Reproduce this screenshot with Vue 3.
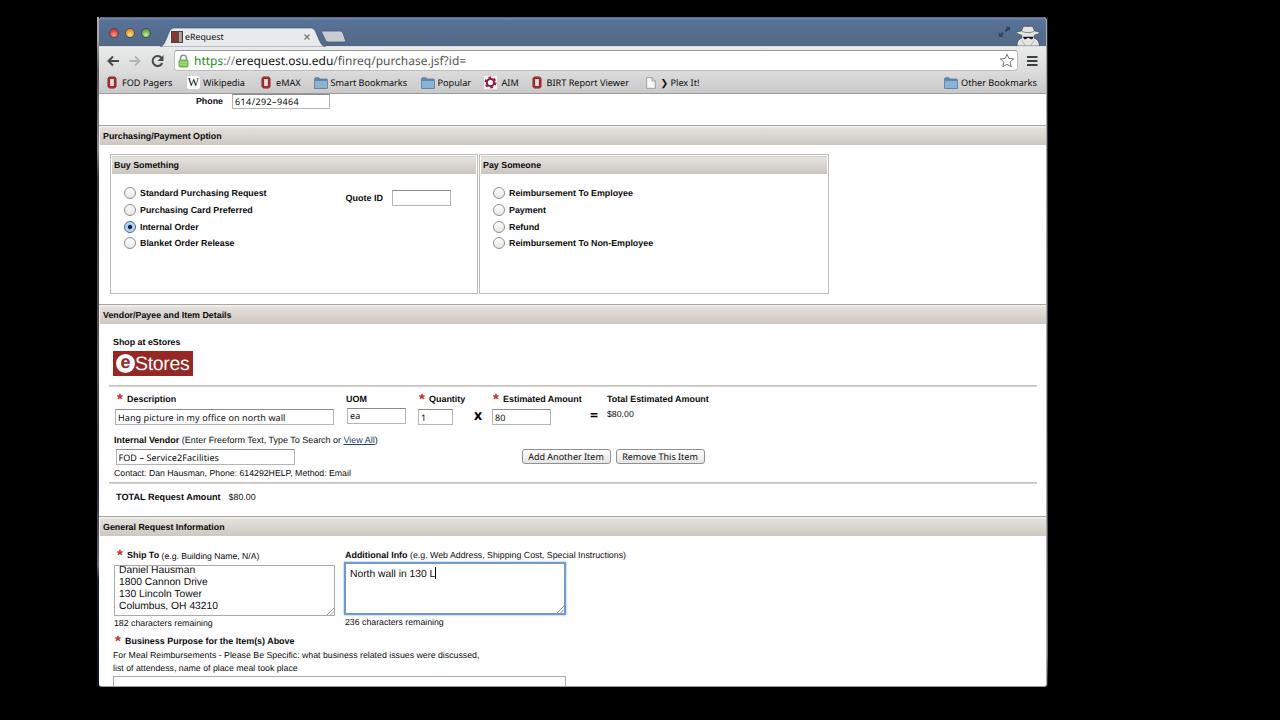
<script setup>
const bookmarks = [
  { icon: 'osu', label: 'FOD Pagers', w: 80 },
  { icon: 'wiki', label: 'Wikipedia', w: 74 },
  { icon: 'osu', label: 'eMAX', w: 52.5 },
  { icon: 'folder', label: 'Smart Bookmarks', w: 107 },
  { icon: 'folder', label: 'Popular', w: 63 },
  { icon: 'aim', label: 'AIM', w: 48 },
  { icon: 'osu', label: 'BIRT Report Viewer', w: 114 },
  { icon: 'page', label: '❯ Plex It!', w: 60 },
]
const buyOptions = ['Standard Purchasing Request', 'Purchasing Card Preferred', 'Internal Order', 'Blanket Order Release']
const payOptions = ['Reimbursement To Employee', 'Payment', 'Refund', 'Reimbursement To Non-Employee']
const selected = 'Internal Order'
const address = ['Daniel Hausman', '1800 Cannon Drive', '130 Lincoln Tower', 'Columbus, OH 43210']
</script>

<template>
  <div class="desktop">
    <div class="edge left"></div>
    <div class="window">
      <header class="titlebar">
        <div class="lights"><i class="red"></i><i class="amber"></i><i class="green"></i></div>
        <div class="tab">
          <svg class="tab-shape" width="166" height="20" viewBox="0 0 166 20">
            <path d="M0 20 C4 19 5 15 8 8 C10 3 11 1 15 1 H150 C154 1 155 3 157 8 C160 15 161 19 166 20Z" fill="#e9eaeb" stroke="#41536f" stroke-width=".6" />
          </svg>
          <svg class="favicon" width="12" height="12" viewBox="0 0 12 12">
            <rect width="12" height="12" fill="#474443" /><rect x="1" y="1" width="5.5" height="10" fill="#8c3532" /><rect x="6.5" y="1" width="1.5" height="10" fill="#5d4a48" /><rect x="8" y="1" width="2.7" height="10" fill="#b4aaa4" />
          </svg>
          <span class="tab-title">eRequest</span>
          <svg class="close" width="6" height="6" viewBox="0 0 6 6"><path d="M.5 .5 5.5 5.5M5.5 .5 .5 5.5" stroke="#7b7b7b" stroke-width="1.3" /></svg>
        </div>
        <svg class="newtab" width="26" height="13" viewBox="0 0 26 13"><path d="M1.5 1 H19 Q21 1 22 3 L24.5 10.5 Q25 12 23 12 H7.500 Q5.500 12 4.700 10.500 L1 3 Q.3 1 1.500 1Z" fill="#c9ccce" stroke="#48597a" stroke-width=".8" /></svg>
        <svg class="expand" width="13" height="12" viewBox="0 0 13 12"><path d="M7.500 .8H12V5.300L10.500 3.800 8.300 6 6.800 4.500 9 2.300ZM.8 6.300V11H5.500L4 9.500 6 7.500 4.500 6 2.300 8Z" fill="#2f435f" /></svg>
        <svg class="incognito" width="26" height="21" viewBox="0 0 26 21">
          <path d="M2 21 C2 16 4 14 7 13 L6.500 10 C4 9.500 1.500 8.500 1 7.500 C3 6.500 5 6.500 6.500 6 L8 2 C9 .5 11 1.500 13 1.500 C15 1.500 17 .5 18 2 L19.500 6 C21 6.500 23 6.500 25 7.500 C24.500 8.500 22 9.500 19.500 10 L19 13 C22 14 24 16 24.500 21Z" fill="#e4e4e3" stroke="#40485a" stroke-width=".7" />
          <path d="M7 6.500 C11 8 15 8 19 6.500" fill="none" stroke="#8b8b8b" stroke-width="1" />
          <path d="M8 11.800H18.500L17.500 14Q15.800 15 14.200 13H12.300Q10.700 15 9 14Z" fill="#17191d" />
          <path d="M7 15.500 10.500 21M19 15.500 15.500 21" stroke="#a5a5a5" stroke-width=".8" />
        </svg>
      </header>

      <div class="toolbar">
        <svg class="nav" width="62" height="16" viewBox="0 0 62 16" fill="none">
          <path d="M14 8H3.500M8 3.500 3.500 8 8 12.500" stroke="#484848" stroke-width="2" />
          <path d="M24.500 8H34.500M30 3.500 34.500 8 30 12.500" stroke="#b3b3b3" stroke-width="1.8" />
          <path d="M56.500 4.800A5 5 0 1 0 57.200 10" stroke="#484848" stroke-width="2" /><path d="M58.500 2V8H52.500Z" fill="#484848" />
        </svg>
        <div class="omnibox">
          <svg class="lock" width="11" height="14" viewBox="0 0 11 14"><path d="M2.500 7V4.200A3 3 0 0 1 8.500 4.200V7" fill="none" stroke="#8b9a87" stroke-width="1.500" /><rect x="1" y="6" width="9" height="7" rx="1" fill="#85ce5d" stroke="#549f39" stroke-width=".8" /><path d="M2 8.500H9M2 10.700H9" stroke="#b0e58c" stroke-width=".7" /></svg>
          <span class="url"><span class="scheme">https</span><span class="sep">://</span><span class="host">erequest.osu.edu</span>/finreq/purchase.jsf?id=</span>
          <svg class="star" width="16" height="15" viewBox="0 0 16 15"><path d="M8 1.200 9.900 5.500 14.700 5.900 11.100 9.100 12.200 13.700 8 11.300 3.800 13.700 4.900 9.100 1.300 5.900 6.100 5.500Z" fill="#fff" stroke="#777" stroke-width="1" stroke-linejoin="round" /></svg>
        </div>
        <svg class="menu" width="11" height="12" viewBox="0 0 11 12"><path d="M0 2H10.500M0 6H10.500M0 10H10.500" stroke="#3f3f3f" stroke-width="2.200" /></svg>
      </div>

      <nav class="bookmarks">
        <template v-for="(b, i) in [...bookmarks, { icon: 'folder', label: 'Other Bookmarks', w: 95, last: true }]" :key="i">
          <div class="bookmark" :class="[b.icon, { last: b.last }]" :style="{ width: b.w + 'px' }">
            <svg v-if="b.icon === 'osu'" width="10" height="13" viewBox="0 0 10 13"><path d="M3 1.700H7L8.200 2.900V10.100L7 11.300H3L1.800 10.100V2.900Z" fill="#ddd" stroke="#7d2022" stroke-width="2.600" /><path d="M3 1.700H7L8.200 2.900V10.100L7 11.300H3L1.800 10.100V2.900Z" fill="none" stroke="#b22d2f" stroke-width="1.400" /></svg>
            <span v-else-if="b.icon === 'wiki'" class="wikimark">W</span>
            <svg v-else-if="b.icon === 'folder'" width="14" height="12" viewBox="0 0 14 12"><path d="M.6 2Q.6 .7 1.600 .7H5L6.200 2H12.500Q13.400 2 13.400 3V11.400H.6Z" fill="#6289ac" stroke="#53718e" stroke-width=".7" /><path d="M1 4H13V11H1Z" fill="#87b4d5" /></svg>
            <svg v-else-if="b.icon === 'aim'" width="13" height="13" viewBox="0 0 13 13"><rect width="13" height="13" fill="#f8f5f6" /><circle cx="6.500" cy="6.500" r="5" fill="none" stroke="#9b1a40" stroke-width="2" stroke-dasharray="2.600 2.636" /><circle cx="6.500" cy="6.500" r="3.600" fill="#fff" stroke="#9b1a40" stroke-width="2" /></svg>
            <svg v-else width="10" height="12" viewBox="0 0 10 12"><path d="M.7 .7H6L9.300 4V11.300H.7Z" fill="#fafafa" stroke="#8d8d8d" stroke-width=".8" /><path d="M6 .7V4H9.300" fill="none" stroke="#8d8d8d" stroke-width=".8" /></svg>
            <span>{{ b.label }}</span>
          </div>
        </template>
      </nav>

      <main class="page">
        <div class="phone-row"><b>Phone</b><span class="field phone">614/292–9464</span></div>

        <h2>Purchasing/Payment Option</h2>
        <section class="options">
          <div class="panel buy">
            <h3>Buy Something</h3>
            <div class="panel-body">
              <ul><li v-for="o in buyOptions" :key="o"><i class="radio" :class="{ on: o === selected }"></i>{{ o }}</li></ul>
              <div class="quote"><b>Quote ID</b><span class="field"></span></div>
            </div>
          </div>
          <div class="panel pay">
            <h3>Pay Someone</h3>
            <div class="panel-body">
              <ul><li v-for="o in payOptions" :key="o"><i class="radio"></i>{{ o }}</li></ul>
            </div>
          </div>
        </section>

        <h2>Vendor/Payee and Item Details</h2>
        <section class="details">
          <b class="shop">Shop at eStores</b>
          <div class="logo"><span class="logo-e">e</span><span class="logo-t">Stores</span></div>
          <div class="rule"></div>
          <div class="item-row">
            <div class="cell desc"><b><em>*</em>Description</b><span class="field">Hang picture in my office on north wall</span></div>
            <div class="cell uom"><b>UOM</b><span class="field">ea</span></div>
            <div class="cell qty"><b><em>*</em>Quantity</b><span class="field">1</span></div>
            <span class="op times">x</span>
            <div class="cell amt"><b><em>*</em>Estimated Amount</b><span class="field">80</span></div>
            <span class="op">=</span>
            <div class="cell total"><b>Total Estimated Amount</b><span>$80.00</span></div>
          </div>
          <div class="vendor-label"><b>Internal Vendor</b> (Enter Freeform Text, Type To Search or <u>View All</u>)</div>
          <div class="vendor-row">
            <span class="field">FOD – Service2Facilities</span>
            <span class="btn add">Add Another Item</span>
            <span class="btn">Remove This Item</span>
          </div>
          <div class="contact">Contact: Dan Hausman, Phone: 614292HELP, Method: Email</div>
          <div class="rule"></div>
          <div class="grand"><b>TOTAL Request Amount</b><span>$80.00</span></div>
        </section>

        <h2>General Request Information</h2>
        <section class="general">
          <div class="areas">
            <div class="ship">
              <div class="label"><b><em>*</em>Ship To</b> <span class="hint">(e.g. Building Name, N/A)</span></div>
              <div class="area">
                <div v-for="a in address" :key="a">{{ a }}</div>
                <svg class="grip" width="7" height="7" viewBox="0 0 7 7"><path d="M0 7 7 0M3.500 7 7 3.500" stroke="#777" stroke-width=".8" /></svg>
              </div>
              <div class="remaining">182 characters remaining</div>
            </div>
            <div class="info">
              <div class="label"><b>Additional Info</b> (e.g. Web Address, Shipping Cost, Special Instructions)</div>
              <div class="area focus">
                <div>North wall in 130 L<i class="caret"></i></div>
                <svg class="grip" width="7" height="7" viewBox="0 0 7 7"><path d="M0 7 7 0M3.500 7 7 3.500" stroke="#777" stroke-width=".8" /></svg>
              </div>
              <div class="remaining">236 characters remaining</div>
            </div>
          </div>
          <div class="purpose"><b><em>*</em>Business Purpose for the Item(s) Above</b></div>
          <p>For Meal Reimbursements - Please Be Specific: what business related issues were discussed,<br />list of attendess, name of place meal took place</p>
          <div class="purpose-area"></div>
        </section>
      </main>
    </div>
    <div class="edge right"></div>
  </div>
</template>

<style>
html, body { margin: 0; background: #000; overflow: hidden; }
</style>

<style scoped>
* { box-sizing: border-box; }
.desktop { width: 1280px; height: 720px; background: #000; display: flex; padding: 17px 0 0 97px; overflow: hidden; font: 8.75px/12px "Liberation Sans", Arial, sans-serif; color: #0c0c0c; text-rendering: geometricPrecision; white-space: nowrap; }
.edge { width: 2px; height: 669px; }
.edge.left { background: linear-gradient(#aaa 0 3%, #55595c 8%, #8b8b8b 20%, #383838 24%, #555 50%, #2d3036 70%, #667 82%, #17202f 84%, #0c1524 100%); }
.edge.right { width: 1px; background: linear-gradient(#222, #555 40%, #333 60%, #777 95%, #222); }
.window { width: 948px; height: 670px; border-radius: 4px 4px 3px 3px; overflow: hidden; background: #fff; border-right: 1px solid #a8abb0; border-bottom: 1px solid #999; display: flex; flex-direction: column; }

.titlebar { flex: none; height: 30px; background: linear-gradient(#7590b0 0, #58729a 2px, #556d8e 50%, #536987); display: flex; align-items: flex-end; border-bottom: 1px solid #d9dfe0; border-top: 1px solid #5c6a7c; }
.lights { display: flex; gap: 6px; margin: 0 0 8px 10px; width: 51px; }
.lights i { width: 10px; height: 10px; border-radius: 50%; border: 1px solid #4a4a55; }
.red { background: radial-gradient(circle at 50% 75%, #ff9d90, #d93a35 65%); }
.amber { background: radial-gradient(circle at 50% 75%, #ffe08a, #e29a2e 65%); }
.green { background: radial-gradient(circle at 50% 75%, #c6f29a, #5ea940 65%); }
.tab { position: relative; width: 166px; height: 20px; display: flex; align-items: center; padding: 1px 16px 0 11px; font: 8.8px/12px "Noto Sans", sans-serif; }
.tab-shape { position: absolute; left: 0; bottom: -1px; }
.favicon, .tab-title, .close { position: relative; }
.tab-title { margin-left: 2px; }
.close { margin-left: auto; }
.newtab { margin: 0 0 3px -5px; }
.expand { margin: 0 4px 8px auto; }
.incognito { margin-right: 5px; }

.toolbar { flex: none; height: 26px; background: linear-gradient(#e9eaea, #dbdbdb); display: flex; align-items: center; padding-left: 6px; }
.nav { flex: none; margin-right: 7px; margin-top: 1px; }
.omnibox { width: 844px; height: 21px; background: #fff; border: 1px solid #bdbdbd; border-top-color: #9b9b9b; border-radius: 3px; display: flex; align-items: center; padding: 0 2px 0 3px; margin-top: 1px; }
.url { font: 11.97px/18px "Noto Sans", sans-serif; color: #555; margin-left: 5px; padding-top: 1px; }
.url .scheme { color: #2c8b21; }
.url .sep { color: #777; }
.url .host { color: #111; }
.star { margin-left: auto; }
.menu { margin: 1px 0 0 9px; }

.bookmarks { flex: none; height: 21px; background: linear-gradient(#dadada, #c9c9c9); border-bottom: 1px solid #9b9b9b; display: flex; align-items: center; padding: 0 0 1px 8px; font: 9.14px/14px "Noto Sans", sans-serif; }
.bookmark { flex: none; display: flex; align-items: center; gap: 5px; }
.bookmark svg, .wikimark { flex: none; }
.bookmark.folder, .bookmark.wiki { gap: 3px; }
.bookmark.last { margin-left: auto; margin-right: 7px; }
.wikimark { width: 13px; height: 13px; border-radius: 2px; background: #fff; font: 12px/13px "Liberation Serif", serif; text-align: center; display: flex; justify-content: center; }

.page { flex: 1; min-height: 0; overflow: hidden; }
b, h2, h3, li { font-weight: 700; font-size: 8.87px; }
em { display: inline-block; width: 11px; height: 8px; padding-left: 1px; color: #cc2b2a; font: 700 15px/12px "Liberation Sans", Arial, sans-serif; vertical-align: -2px; }
.field { display: block; height: 15px; border: 1px solid #b5b5b5; border-top-color: #8b8b8b; background: #fff; font: 9px/14px "Noto Sans", sans-serif; letter-spacing: .08px; padding-left: 2px; }
.phone-row { height: 31px; display: flex; }
.phone-row b { width: 124px; text-align: right; line-height: 14px; margin-right: 9px; }
.phone { width: 98px; letter-spacing: .4px; }
h2 { margin: 0; height: 20px; border-top: 1px solid #a5a5a1; background: linear-gradient(#f2f1ee 0 1px, #e4e1dd 2px, #cdc7c0); padding-left: 4px; line-height: 21px; box-shadow: inset 1px 0 #f4f4f2; }

.options { display: flex; gap: 1px; height: 159px; padding: 9px 0 0 11px; }
.panel { height: 140px; border: 1px solid #bdbdbd; padding: 1px; }
.panel.buy { width: 368px; }
.panel.pay { width: 350px; }
h3 { margin: 0; height: 18px; line-height: 17px; padding-left: 2px; background: linear-gradient(#e6e3e0, #cbc5be); border-top: 1px solid #cfcfcf; }
.panel-body { display: flex; justify-content: space-between; }
ul { list-style: none; margin: 0; padding: 10.750px 0 0 12px; }
li { height: 16.75px; display: flex; align-items: center; }
.radio { width: 12px; height: 12px; border-radius: 50%; border: 1px solid #8e8e8e; background: linear-gradient(#fff, #e6e6e6); margin-right: 4px; }
.radio.on { background: radial-gradient(circle, #14203f 0 1.7px, #9cc3ef 2.4px, #c4e0fb 5px); border-color: #4d6389; }
.quote { display: flex; padding: 16px 25px 0 0; line-height: 16px; }
.quote .field { width: 59px; margin-left: 9px; height: 16px; }
.quote b { font-size: 9px; }

.details { height: 192px; }
.shop { display: block; padding: 12px 0 0 14px; height: 27px; line-height: 13px; }
.logo { width: 80px; height: 25px; margin-left: 14px; background: #972724; color: #fff; display: flex; align-items: center; padding-left: 3px; }
.logo-e { width: 19px; height: 19px; border-radius: 50%; background: #fff; color: #972724; font: 700 18px/19px "Liberation Sans", sans-serif; display: flex; justify-content: center; align-items: center; padding-bottom: 3px; flex: none; }
.logo-t { font-size: 19.5px; letter-spacing: -.3px; font-weight: 400; }
.rule { height: 2px; background: linear-gradient(#bfbbb6, #dedbd8); margin: 9px 9px 0 10px; }
.item-row { display: flex; height: 46px; padding: 6px 0 0 16px; }
.cell { display: flex; flex-direction: column; }
.cell b { height: 16px; line-height: 12px; font-size: 8.95px; }
.desc { width: 232px; }
.desc b { padding-left: 1px; }
.desc .field { width: 219px; height: 16px; }
.uom { width: 71px; }
.uom b { margin-left: -1px; }
.uom .field { width: 59px; height: 16px; margin-top: -1px; }
.qty { width: 56px; }
.desc .field, .qty .field, .amt .field { line-height: 16px; }
.qty .field { width: 35px; height: 16px; }
.op { font: 700 14px/14px "Noto Sans", "DejaVu Sans", sans-serif; color: #000; padding-top: 16px; width: 18px; }
.amt { width: 98px; }
.amt .field { width: 59px; height: 16px; }
.amt + .op { width: 17px; }
.total b { height: 15px; }
.vendor-label { padding-left: 15px; height: 15px; line-height: 14px; font-size: 8.96px; }
.vendor-label b { font-size: 8.98px; }
.vendor-label u { color: #24466e; }
.vendor-row { display: flex; padding-left: 16.500px; height: 18px; }
.vendor-row .field { width: 179px; height: 16px; margin-top: 1px; line-height: 15px; }
.btn { width: 89px; height: 15px; border: 1px solid #8f8f8f; border-radius: 3px; background: linear-gradient(#fff, #e4e4e4); font: 9px/13px "Noto Sans", sans-serif; text-align: center; margin: 1px 0 0 5px; }
.btn.add { margin-left: 227px; }
.contact { padding: 1px 0 0 15px; height: 16px; line-height: 13px; font-size: 8.72px; }
.contact + .rule { margin-top: 0; }
.grand { padding: 7px 0 0 17px; display: flex; gap: 8px; font-size: 8.85px; }
.grand b { font-size: 9.15px; }

.general { padding-top: 11px; }
.areas { display: flex; }
.label { height: 15px; line-height: 16px; font-size: 8.8px; }
.label b { font-size: 8.95px; }
.ship { width: 230px; padding-left: 15px; }
.ship .label { padding-left: 2px; height: 18px; }
.ship .label .hint { font-size: 8.65px; }
.hint { position: relative; top: 1px; }
.area { position: relative; width: 221px; height: 51px; border: 1px solid #aaa; font-size: 10.3px; line-height: 12px; padding-left: 4px; overflow: hidden; }
.area > div:first-child { margin-top: -1px; }
.area.focus { width: 222px; height: 53px; border: 2px solid #7199cb; box-shadow: 0 0 2px #7ba9df; padding: 4px 0 0 4px; margin-left: -1px; }
.grip { position: absolute; right: 0; bottom: 0; }
.caret { display: inline-block; width: 1px; height: 12px; background: #000; vertical-align: -2px; }
.info { padding-left: 16px; }
.remaining { line-height: 13px; margin-top: 1px; }
.purpose { margin: 5px 0 0 15px; line-height: 13px; height: 13px; }
.purpose b { font-size: 8.95px; }
p { margin: 1px 0 0 14px; line-height: 13px; font-size: 8.78px; }
.purpose-area { width: 453px; height: 30px; margin: 1px 0 0 14px; border: 1px solid #aaa; }
</style>
